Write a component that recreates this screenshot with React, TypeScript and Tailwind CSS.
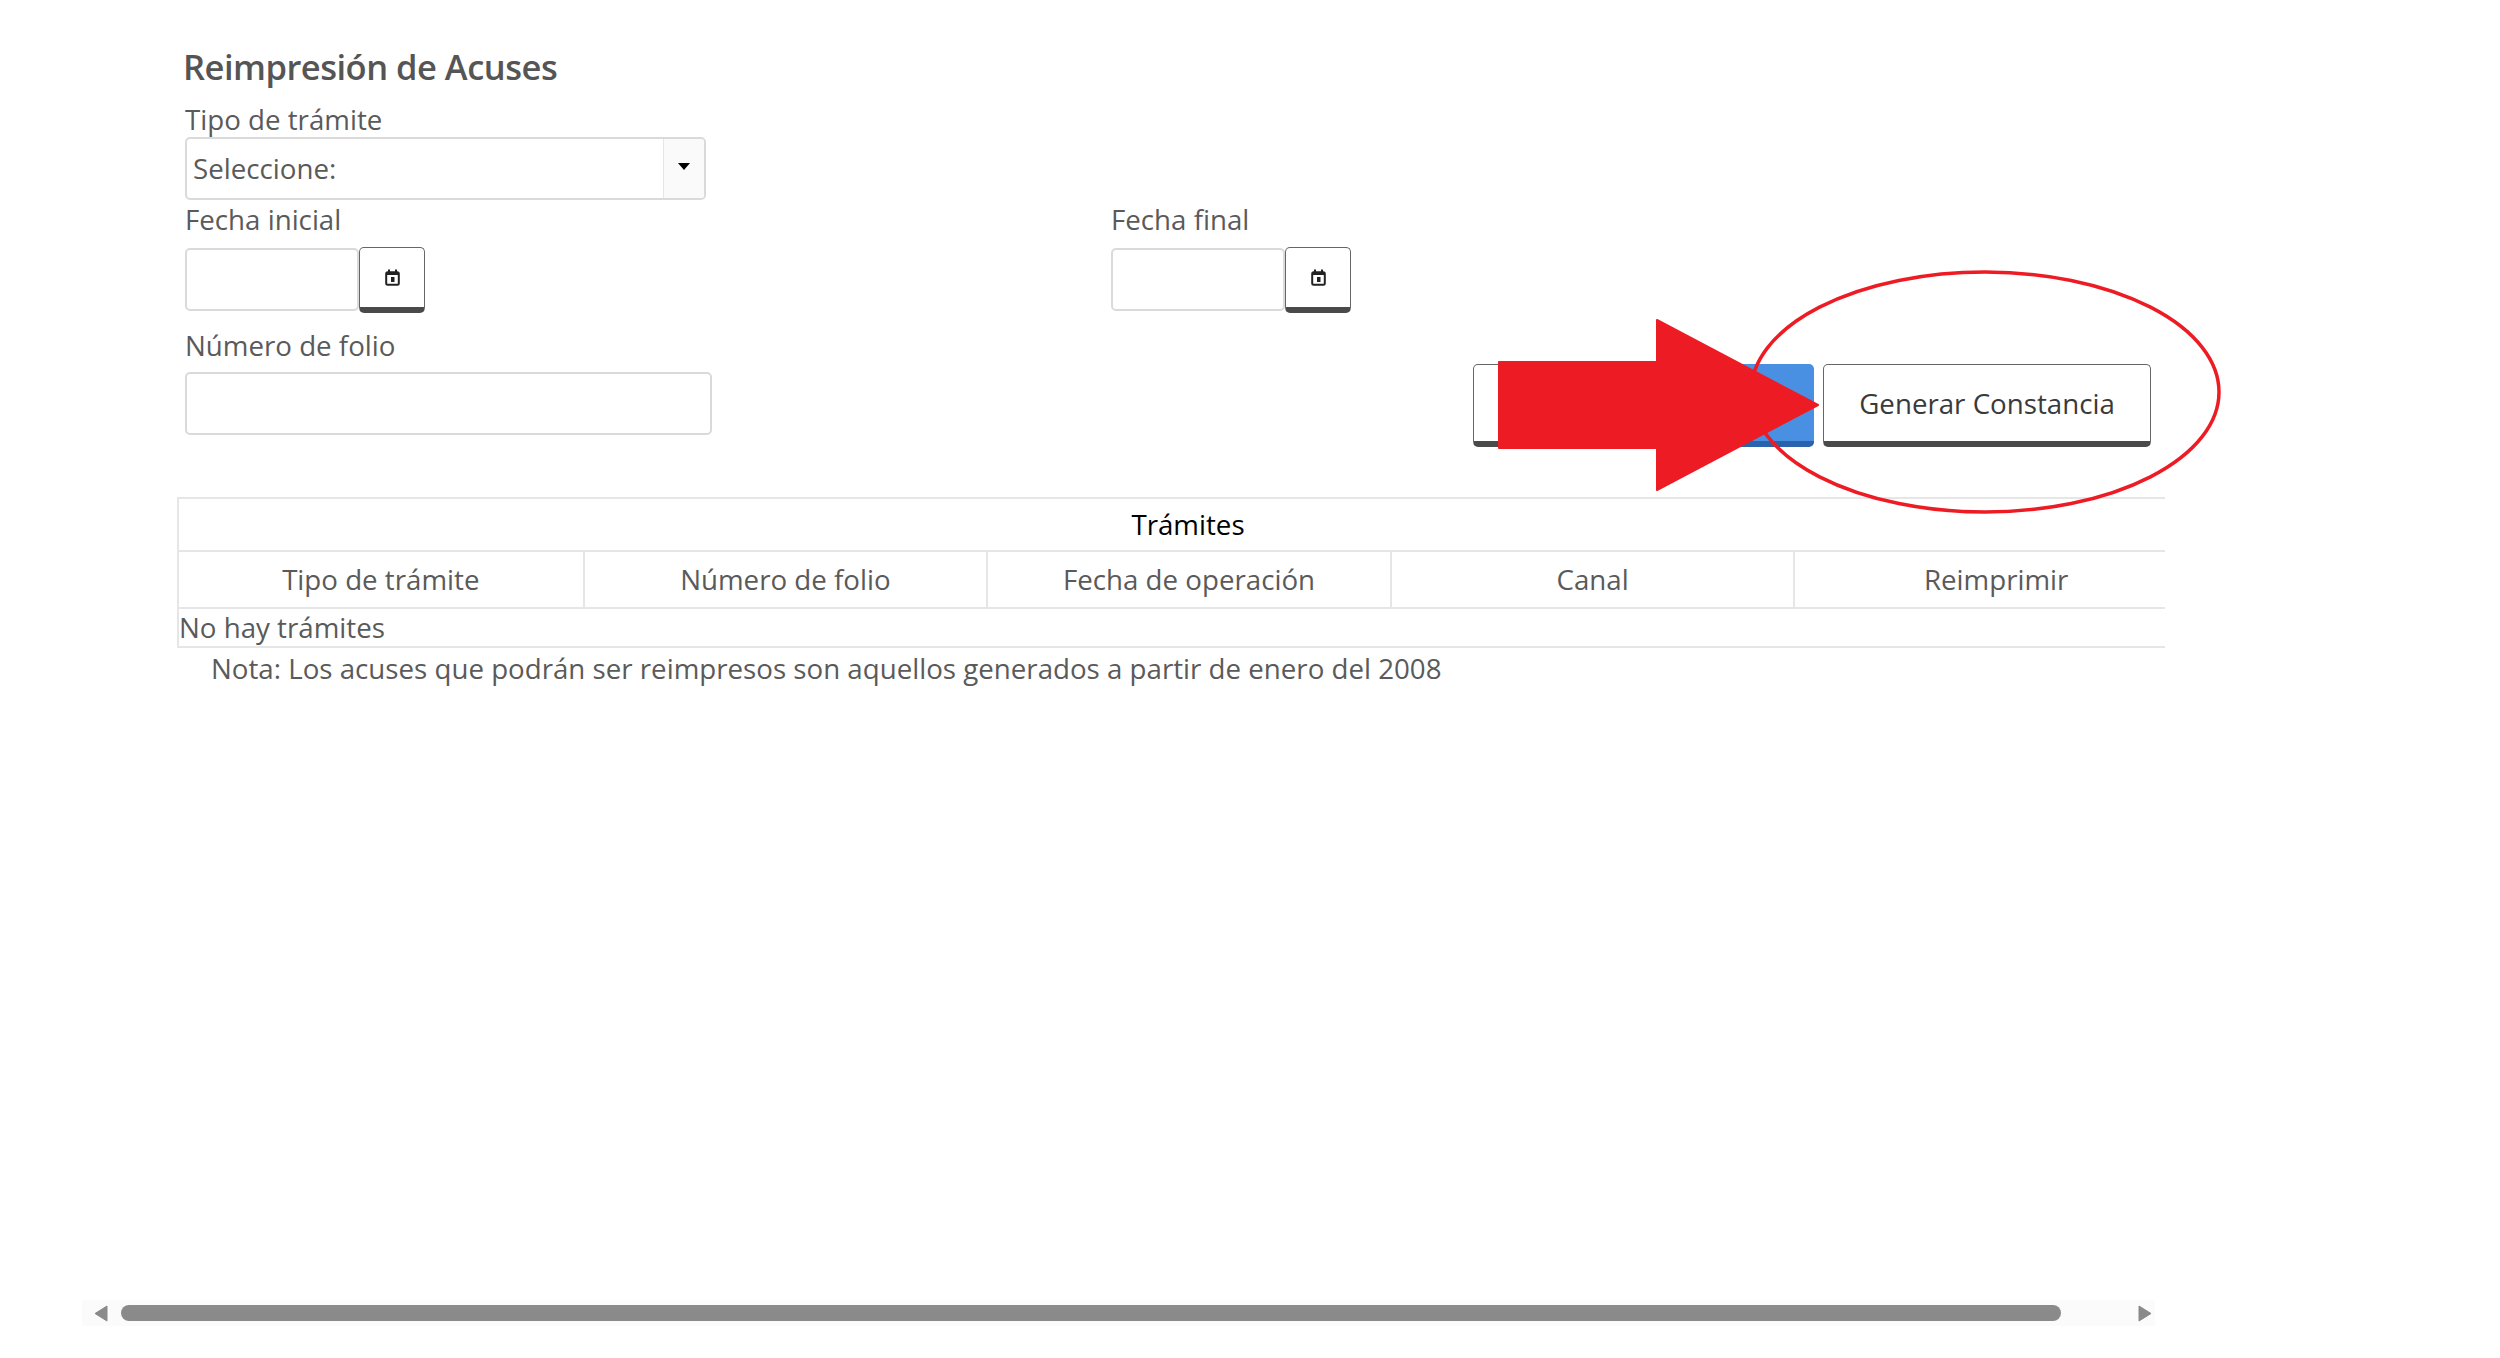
const columns = ["Tipo de trámite", "Número de folio", "Fecha de operación", "Canal", "Reimprimir"];

function CalendarIcon() {
  return (
    <svg width="15" height="17" viewBox="0 0 15 17" fill="none">
      <rect x="1.2" y="3.2" width="12.6" height="12.6" rx="1.5" stroke="#222" strokeWidth="2" />
      <rect x="1" y="3" width="13" height="3" fill="#222" />
      <rect x="3" y="0.5" width="2" height="3" fill="#222" />
      <rect x="10" y="0.5" width="2" height="3" fill="#222" />
      <rect x="6" y="8" width="3.5" height="5" fill="#222" />
    </svg>
  );
}

function DateField() {
  return (
    <div className="flex items-start">
      <div className="mt-px h-[63px] w-[174px] rounded-[5px] border-2 border-[#dadada] bg-white" />
      <button className="flex h-[66px] w-[66px] items-center justify-center rounded-[5px] border border-b-[6px] border-[#666] border-b-[#4a4a4a] bg-white">
        <CalendarIcon />
      </button>
    </div>
  );
}

function Scrollbar() {
  return (
    <div className="mt-auto mb-[32px] ml-[82px] flex h-[26px] w-[2073px] items-center bg-[#fbfbfb]">
      <svg width="14" height="17" viewBox="0 0 14 17" className="ml-[12px]">
        <path d="M13 1 L13 16 L1 8.5 Z" fill="#8a8a8a" stroke="#8a8a8a" strokeLinejoin="round" />
      </svg>
      <div className="ml-[13px] h-[16px] w-[1940px] rounded-full bg-[#8a8a8a]" />
      <svg width="14" height="17" viewBox="0 0 14 17" className="ml-[77px]">
        <path d="M1 1 L1 16 L13 8.5 Z" fill="#8a8a8a" stroke="#8a8a8a" strokeLinejoin="round" />
      </svg>
    </div>
  );
}

function Annotation() {
  return (
    <svg className="pointer-events-none absolute top-0 left-0" width="2500" height="1358">
      <ellipse cx="1985" cy="392" rx="234" ry="120" fill="none" stroke="#ed1c24" strokeWidth="3.5" />
      <path d="M1499 362 H1657 V320 L1818 405 L1657 490 V448 H1499 Z" fill="#ed1c24" stroke="#ed1c24" strokeWidth="2" strokeLinejoin="round" />
    </svg>
  );
}

export default function App() {
  return (
    <div className="relative flex h-[1358px] w-[2500px] flex-col overflow-hidden bg-white font-['Open_Sans',sans-serif] text-[27.7px] text-[#5a5a5a]">
      <div className="pt-[46px] pl-[183px]">
        <h1 className="text-[34.5px] leading-[42px] font-semibold tracking-[-0.5px] text-[#555]">Reimpresión de Acuses</h1>
      </div>

      <div className="pl-[185px]">
        <div className="mt-[14px] mb-px leading-[34px]">Tipo de trámite</div>
        <div className="flex h-[63px] w-[521px] overflow-hidden rounded-[5px] border-2 border-[#dadada]">
          <div className="flex-1 pl-[6px] leading-[58px]">Seleccione:</div>
          <div className="flex w-[41px] justify-center border-l border-[#e6e6e6] bg-[#fafafa] pt-[24px]">
            <div className="h-0 w-0 border-x-[6px] border-t-[7px] border-x-transparent border-t-black" />
          </div>
        </div>

        <div className="flex">
          <div className="w-[926px]">
            <div className="leading-[38px]">Fecha inicial</div>
            <div className="mt-[9px]">
              <DateField />
            </div>
          </div>
          <div>
            <div className="leading-[38px]">Fecha final</div>
            <div className="mt-[9px]">
              <DateField />
            </div>
          </div>
        </div>

        <div className="flex items-start">
          <div className="w-[1288px]">
            <div className="mt-[11px] leading-[42px]">Número de folio</div>
            <div className="mt-[6px] h-[63px] w-[527px] rounded-[5px] border-2 border-[#dadada] bg-white" />
          </div>
          <div className="mt-[51px] flex gap-[8px]">
            <button className="h-[83px] w-[165px] rounded-[5px] border border-b-[6px] border-[#666] border-b-[#4a4a4a] bg-white" />
            <button className="h-[83px] w-[168px] rounded-[5px] border-b-[6px] border-b-[#2a62ab] bg-[#4a90e2]" />
            <button className="ml-px h-[83px] w-[328px] rounded-[5px] border border-b-[6px] border-[#666] border-b-[#4a4a4a] bg-white pt-[2px] text-[#3a3a3a]">
              Generar Constancia
            </button>
          </div>
        </div>
      </div>

      <div className="mt-[50px] ml-[177px] w-[1988px] overflow-hidden">
        <div className="w-[2020px] border-t-2 border-l-2 border-[#e6e6e6]">
          <div className="h-[53px] border-b-2 border-[#e6e6e6] text-center leading-[51px] font-medium text-black">Trámites</div>
          <div className="grid h-[57px] grid-cols-5 border-b-2 border-[#e6e6e6]">
            {columns.map((name, i) => (
              <div key={name} className={i > 0 ? "border-l-2 border-[#e6e6e6] text-center leading-[55px]" : "text-center leading-[55px]"}>
                {name}
              </div>
            ))}
          </div>
          <div className="h-[39px] border-b-2 border-[#e6e6e6] leading-[37px]">No hay trámites</div>
        </div>
      </div>
      <div className="ml-[211px] leading-[40px]">Nota: Los acuses que podrán ser reimpresos son aquellos generados a partir de enero del 2008</div>

      <Scrollbar />
      <Annotation />
    </div>
  );
}
